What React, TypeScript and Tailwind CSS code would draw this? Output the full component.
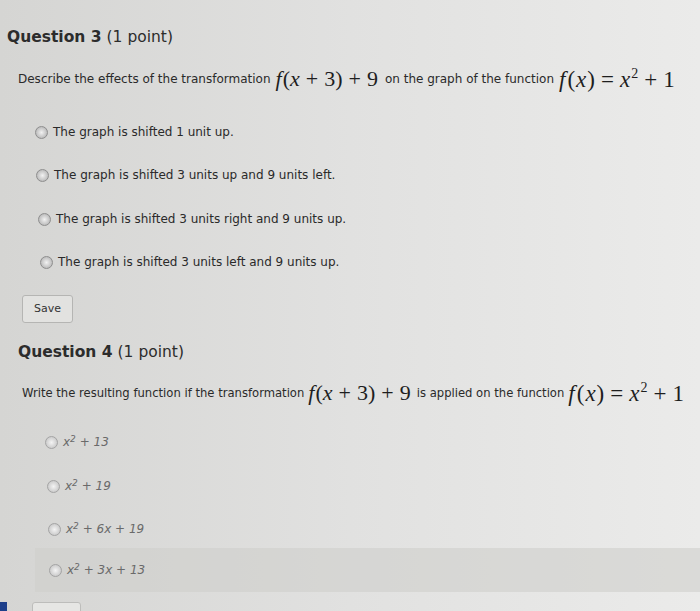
import React from 'react'

const body = { fontFamily: '"DejaVu Sans", Verdana, sans-serif' }
const math = { fontFamily: '"Liberation Serif", "DejaVu Serif", serif' }

function Radio({ light }: { light?: boolean }) {
  return (
    <span
      className={`inline-block w-[13px] h-[13px] rounded-full border flex-shrink-0 bg-radial ${
        light ? 'border-[#a4a4a4] from-[#f4f4f4] to-[#bdbdbd]' : 'border-[#8e8e8e] from-[#f2f2f2] to-[#a9a9a9]'
      }`}
    />
  )
}

function Op({ children }: { children: React.ReactNode }) {
  return <span className="mx-[6px]">{children}</span>
}

function Shift() {
  return (
    <span className="text-[22px] leading-none text-[#1e1e1e] whitespace-nowrap" style={math}>
      <i className="mr-[1px]">f</i>(<i>x</i>
      <Op>+</Op>3)
      <Op>+</Op>9
    </span>
  )
}

function Func() {
  return (
    <span className="text-[23px] leading-none text-[#1e1e1e] whitespace-nowrap" style={math}>
      <i className="mr-[2px]">f</i>(<i className="mx-[1px]">x</i>)<Op>=</Op>
      <i>x</i>
      <sup className="text-[14px] -top-[9px] ml-[1px]">2</sup>
      <Op>+</Op>1
    </span>
  )
}

function Option({ label, pl, mt }: { label: string; pl: string; mt: string }) {
  return (
    <div className={`flex items-center gap-[5px] h-[24px] ${pl} ${mt}`}>
      <Radio />
      <span className="text-[12px] text-[#2a2a2a]">{label}</span>
    </div>
  )
}

function Poly({ children, pl, mt, highlight }: { children: React.ReactNode; pl: string; mt: string; highlight?: boolean }) {
  return (
    <div
      className={`flex items-center gap-[5px] ${mt} ${
        highlight ? 'h-[44px] ml-[35px] pl-[14px] bg-[#cfcfcc]/60' : `h-[24px] ${pl}`
      }`}
    >
      <Radio light />
      <span className="text-[12px] italic text-[#6a6a6a]">{children}</span>
    </div>
  )
}

export default function App() {
  return (
    <div
      className="w-[700px] h-[611px] overflow-hidden bg-gradient-to-r from-[#d5d5d3] via-[#e1e1e0] to-[#ebebea] pt-[28px]"
      style={body}
    >
      {/* Question 3 */}
      <div className="h-[20px] flex items-center pl-[7px] text-[15.5px] text-[#2c2c2c]">
        <span className="font-bold">Question 3</span>
        <span className="ml-[5px]">(1 point)</span>
      </div>

      <div className="h-[30px] mt-[16px] flex items-center pl-[18px] text-[12px] text-[#2a2a2a] gap-[5px] whitespace-nowrap">
        <span>Describe the effects of the transformation</span>
        <Shift />
        <span className="ml-[2px]">on the graph of the function</span>
        <Func />
      </div>

      <Option label="The graph is shifted 1 unit up." pl="pl-[35px]" mt="mt-[26px]" />
      <Option label="The graph is shifted 3 units up and 9 units left." pl="pl-[36px]" mt="mt-[19px]" />
      <Option label="The graph is shifted 3 units right and 9 units up." pl="pl-[38px]" mt="mt-[20px]" />
      <Option label="The graph is shifted 3 units left and 9 units up." pl="pl-[40px]" mt="mt-[19px]" />

      <div className="mt-[21px] pl-[22px]">
        <button className="h-[28px] w-[51px] rounded-[3px] border border-[#b5b5b3] bg-[#e2e2e0] text-[11px] text-[#333]">
          Save
        </button>
      </div>

      {/* Question 4 */}
      <div className="h-[20px] mt-[19px] flex items-center pl-[18px] text-[15.5px] text-[#2c2c2c]">
        <span className="font-bold">Question 4</span>
        <span className="ml-[5px]">(1 point)</span>
      </div>

      <div className="h-[30px] mt-[16px] flex items-center pl-[22px] text-[11.6px] text-[#2a2a2a] gap-[4px] whitespace-nowrap">
        <span>Write the resulting function if the transformation</span>
        <Shift />
        <span className="ml-[2px]">is applied on the function</span>
        <Func />
      </div>

      <Poly pl="pl-[45px]" mt="mt-[22px]">
        x<sup>2</sup> + 13
      </Poly>
      <Poly pl="pl-[47px]" mt="mt-[20px]">
        x<sup>2</sup> + 19
      </Poly>
      <Poly pl="pl-[48px]" mt="mt-[19px]">
        x<sup>2</sup> + 6x + 19
      </Poly>
      <Poly pl="" mt="mt-[7px]" highlight>
        x<sup>2</sup> + 3x + 13
      </Poly>

      <div className="mt-[10px] flex items-start h-[9px]">
        <span className="w-[7px] h-[9px] bg-[#1d3f8a]" />
        <span className="ml-[25px] w-[49px] h-[12px] rounded-[3px] border border-[#bdbdbb] bg-[#e6e6e4]" />
      </div>
    </div>
  )
}
